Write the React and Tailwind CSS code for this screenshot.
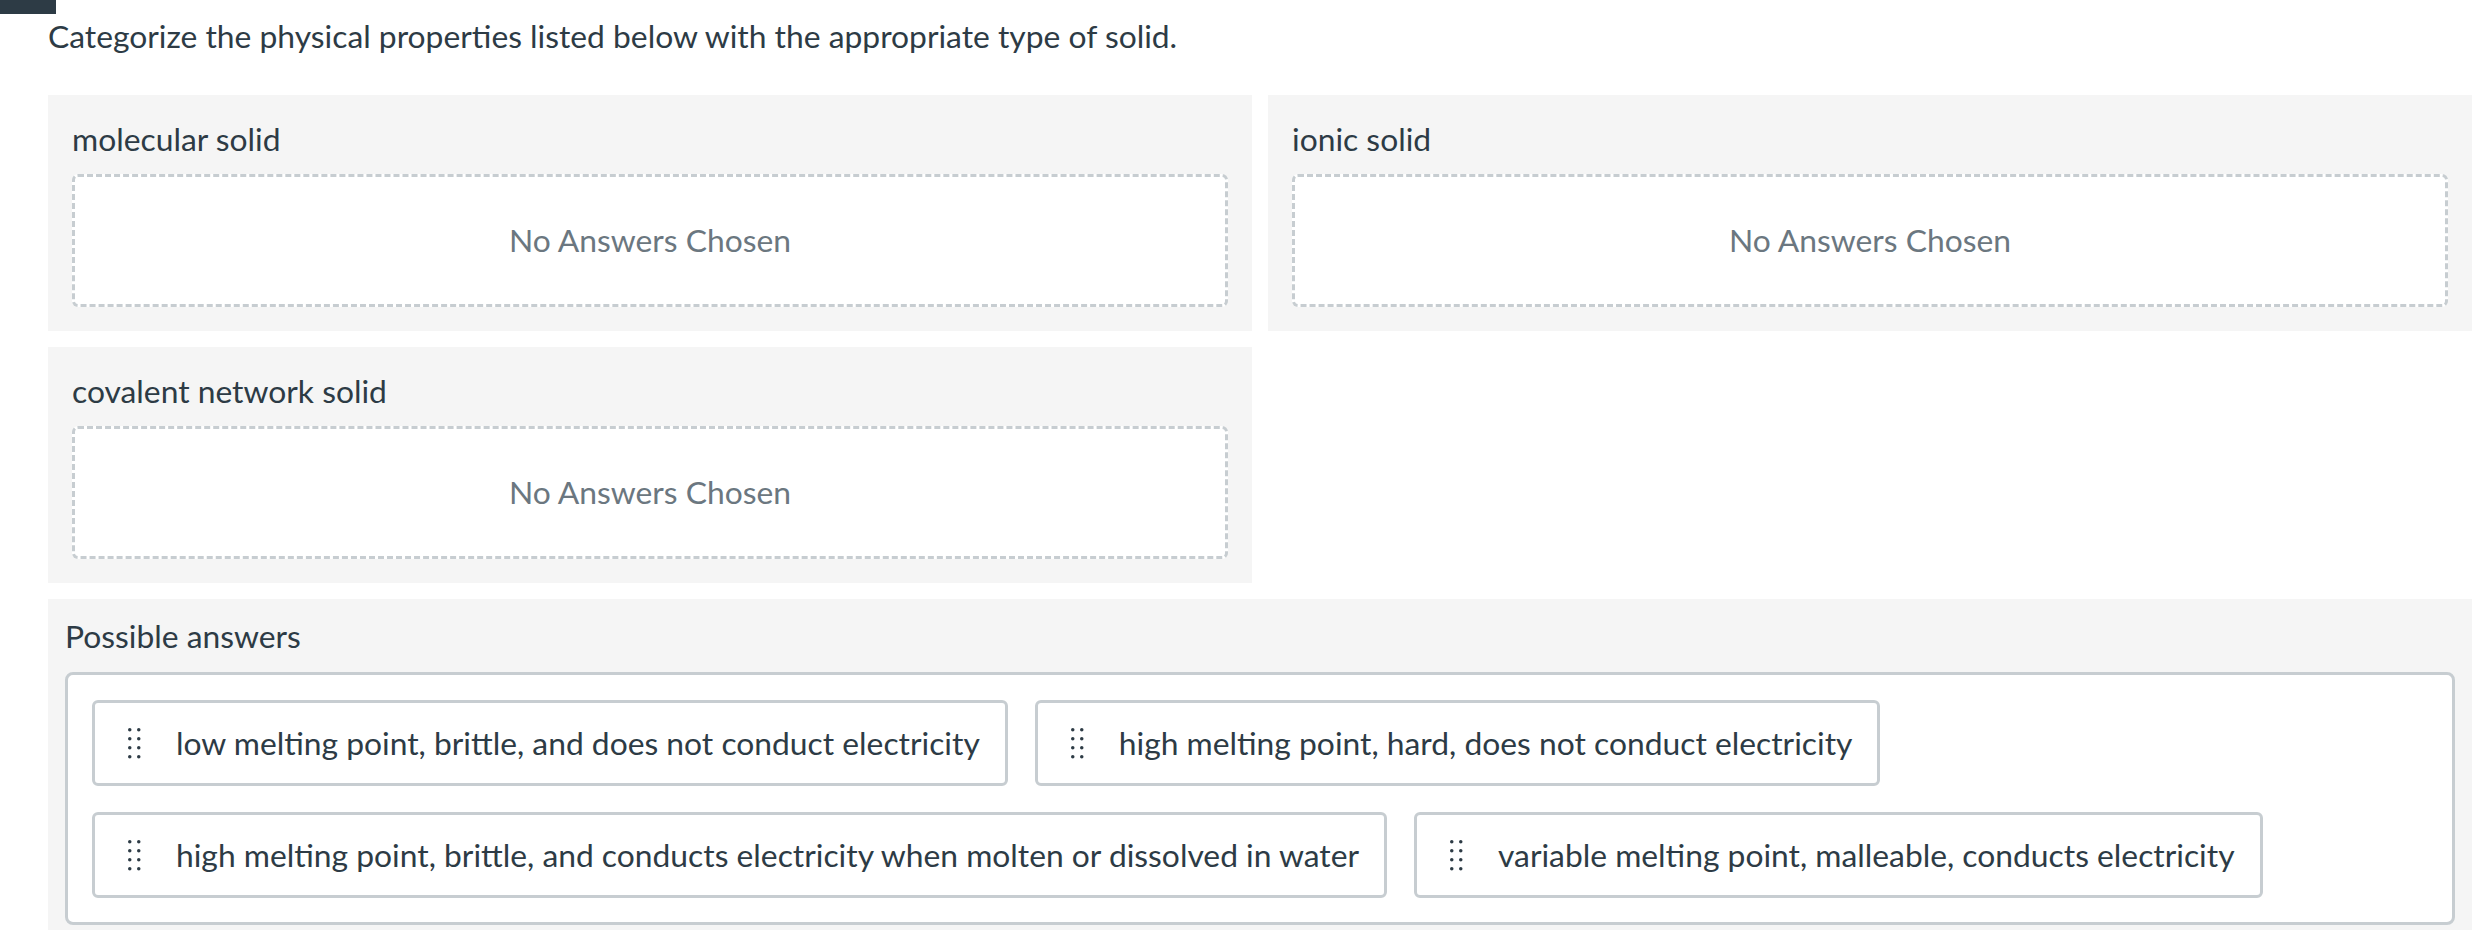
import React from "react";

const categories = [
  ["molecular solid", "ionic solid"],
  ["covalent network solid"],
];

const answers = [
  "low melting point, brittle, and does not conduct electricity",
  "high melting point, hard, does not conduct electricity",
  "high melting point, brittle, and conducts electricity when molten or dissolved in water",
  "variable melting point, malleable, conducts electricity",
];

const DragHandle = () => (
  <svg width="13" height="31" viewBox="0 0 13 31" className="shrink-0" aria-hidden="true">
    {[1.75, 10.75].map((cx) =>
      [1.75, 10.75, 19.75, 28.75].map((cy) => (
        <circle key={`${cx}-${cy}`} cx={cx} cy={cy} r="1.75" fill="#2d3b45" />
      ))
    )}
  </svg>
);

const Category = ({ label }) => (
  <div className="bg-[#f5f5f5] px-6 pt-6 pb-6">
    <div className="text-[31.8px] leading-[40px] mb-[15px]">{label}</div>
    <div className="h-[133px] flex items-center justify-center bg-white border-[3px] border-dashed border-[#c7cdd1] rounded-md">
      <span className="text-[31.8px] text-[#6b7780]">No Answers Chosen</span>
    </div>
  </div>
);

export default function App() {
  return (
    <div
      className="h-screen overflow-hidden bg-white text-[#2d3b45]"
      style={{ fontFamily: "Lato, 'Open Sans', sans-serif" }}
    >
      {/* top-left nav stub */}
      <div className="w-14 h-[14px] bg-[#2d3b45]" />

      <div className="pl-12">
        <p className="mt-[2px] text-[31.8px] leading-[40px]">
          Categorize the physical properties listed below with the appropriate type of solid.
        </p>

        {/* Categories */}
        <div className="mt-[39px] flex flex-col gap-4">
          {categories.map((row, i) => (
            <div key={i} className="grid grid-cols-2 gap-4">
              {row.map((label) => (
                <Category key={label} label={label} />
              ))}
            </div>
          ))}
        </div>

        {/* Possible answers */}
        <div className="mt-4 bg-[#f5f5f5] p-[17px]">
          <div className="text-[31.8px] leading-[40px] mb-4">Possible answers</div>
          <div className="bg-white border-[3px] border-[#c7cdd1] rounded-lg px-6 pt-[25px] pb-6 flex flex-wrap gap-x-[27px] gap-y-[26px]">
            {answers.map((a) => (
              <div
                key={a}
                className="flex items-center h-[86px] border-[3px] border-[#c7cdd1] rounded-md pl-[33px] pr-[25px]"
              >
                <DragHandle />
                <span className="ml-[35px] text-[31.8px] leading-[40px] whitespace-nowrap">{a}</span>
              </div>
            ))}
          </div>
        </div>
      </div>
    </div>
  );
}
